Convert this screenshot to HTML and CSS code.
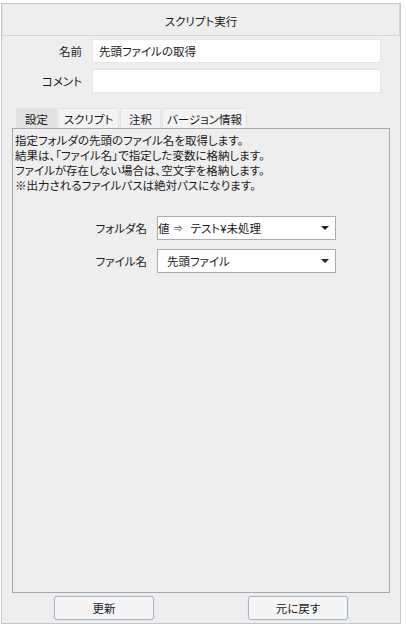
FILE: index.html
```html
<!DOCTYPE html>
<html lang="ja">
<head>
<meta charset="utf-8">
<link rel="stylesheet" href="styles.css">
</head>
<body>
<div class="window">
  <div class="header">スクリプト実行</div>
  <div class="form">
    <div class="row">
      <span class="label">名前</span>
      <div class="input">先頭ファイルの取得</div>
    </div>
    <div class="row">
      <span class="label">コメント</span>
      <div class="input"></div>
    </div>
  </div>
  <div class="tabs">
    <div class="tab active">設定</div>
    <div class="tab">スクリプト</div>
    <div class="tab">注釈</div>
    <div class="tab">バージョン情報</div>
  </div>
  <div class="panel">
    <div class="desc">
      <p>指定フォルダの先頭のファイル名を取得します。</p>
      <p>結果は、「ファイル名」で指定した変数に格納します。</p>
      <p>ファイルが存在しない場合は、空文字を格納します。</p>
      <p>※出力されるファイルパスは絶対パスになります。</p>
    </div>
    <div class="fields">
      <div class="field">
        <span class="flabel">フォルダ名</span>
        <div class="select">
          <span class="value"><span class="kind">値</span><span class="arrow-mark">⇒</span><span class="val">テスト¥未処理</span></span>
          <span class="caret"></span>
        </div>
      </div>
      <div class="field">
        <span class="flabel">ファイル名</span>
        <div class="select">
          <span class="value indent">先頭ファイル</span>
          <span class="caret"></span>
        </div>
      </div>
    </div>
  </div>
  <div class="buttons">
    <button class="btn">更新</button>
    <button class="btn">元に戻す</button>
  </div>
</div>
</body>
</html>
```

FILE: styles.css
```css
html, body {
  margin: 0;
  padding: 0;
  background: #ffffff;
}
body {
  font-family: "Noto Sans CJK JP", "Noto Sans", sans-serif;
  font-size: 11.5px;
  color: #1a1a1a;
  font-feature-settings: "palt";
}
.window {
  box-sizing: border-box;
  width: 400px;
  height: 621px;
  margin: 3px 0 0 1px;
  border: 1px solid #c6c6c6;
  background: #eeeeee;
  display: flex;
  flex-direction: column;
}
.header {
  box-sizing: border-box;
  height: 32px;
  border-bottom: 1px solid #d4d4d4;
  border-left: 1px solid #e2e2e2;
  border-right: 1px solid #d4d4d4;
  display: flex;
  align-items: center;
  justify-content: center;
  padding-top: 3px;
}
.form {
  display: flex;
  flex-direction: column;
  gap: 6px;
  margin-top: 3px;
}
.row {
  display: flex;
  align-items: center;
  gap: 10px;
}
.label {
  width: 80px;
  text-align: right;
}
.input {
  box-sizing: border-box;
  width: 289px;
  height: 24px;
  background: #ffffff;
  border: 1px solid #e6e6e6;
  padding: 0 6px;
  display: flex;
  align-items: center;
}
.tabs {
  display: flex;
  gap: 1px;
  margin: 15px 0 0 12px;
  height: 20px;
}
.tab {
  box-sizing: border-box;
  height: 20px;
  display: flex;
  align-items: center;
  justify-content: center;
  border: 1px solid #e4e4e4;
  border-bottom: none;
  background: #f3f3f3;
}
.tab:nth-child(1) { width: 41px; }
.tab:nth-child(2) { width: 61px; }
.tab:nth-child(3) { width: 41px; }
.tab:nth-child(4) { width: 85px; }
.tab.active {
  background: #e2e2e2;
  border-color: #e2e2e2;
}
.tabs .tab:first-child {
  margin-left: 2px;
}
.panel {
  box-sizing: border-box;
  width: 378px;
  height: 465px;
  margin-left: 10px;
  border: 1px solid #a9a9a9;
  background: #eeeeee;
}
.desc {
  padding: 4px 0 0 2px;
}
.desc p {
  margin: 0;
  height: 15px;
  line-height: 15px;
}
.fields {
  margin-top: 23px;
  display: flex;
  flex-direction: column;
  gap: 9px;
}
.field {
  display: flex;
  align-items: center;
  gap: 10px;
}
.flabel {
  width: 134px;
  text-align: right;
}
.select {
  box-sizing: border-box;
  width: 179px;
  height: 24px;
  background: #ffffff;
  border: 1px solid #acacac;
  display: flex;
  align-items: center;
  justify-content: space-between;
  padding: 0 6px 0 0;
}
.value {
  display: flex;
  align-items: center;
}
.arrow-mark {
  font-size: 9px;
  color: #555;
  margin: 0 8px 0 4px;
}
.indent {
  padding-left: 9px;
}
.caret {
  width: 0;
  height: 0;
  border-left: 4px solid transparent;
  border-right: 4px solid transparent;
  border-top: 4px solid #222;
}
.buttons {
  display: flex;
  justify-content: center;
  gap: 94px;
  margin-top: 3px;
}
.btn {
  box-sizing: border-box;
  width: 100px;
  height: 24px;
  font-family: inherit;
  font-size: 11.5px;
  color: #1a1a1a;
  background: #f5f5f5;
  border: 1px solid #a7b4c4;
  border-radius: 3px;
  box-shadow: 0 0 2px #c9ddf2;
  padding: 0;
  font-feature-settings: "palt";
}
```
